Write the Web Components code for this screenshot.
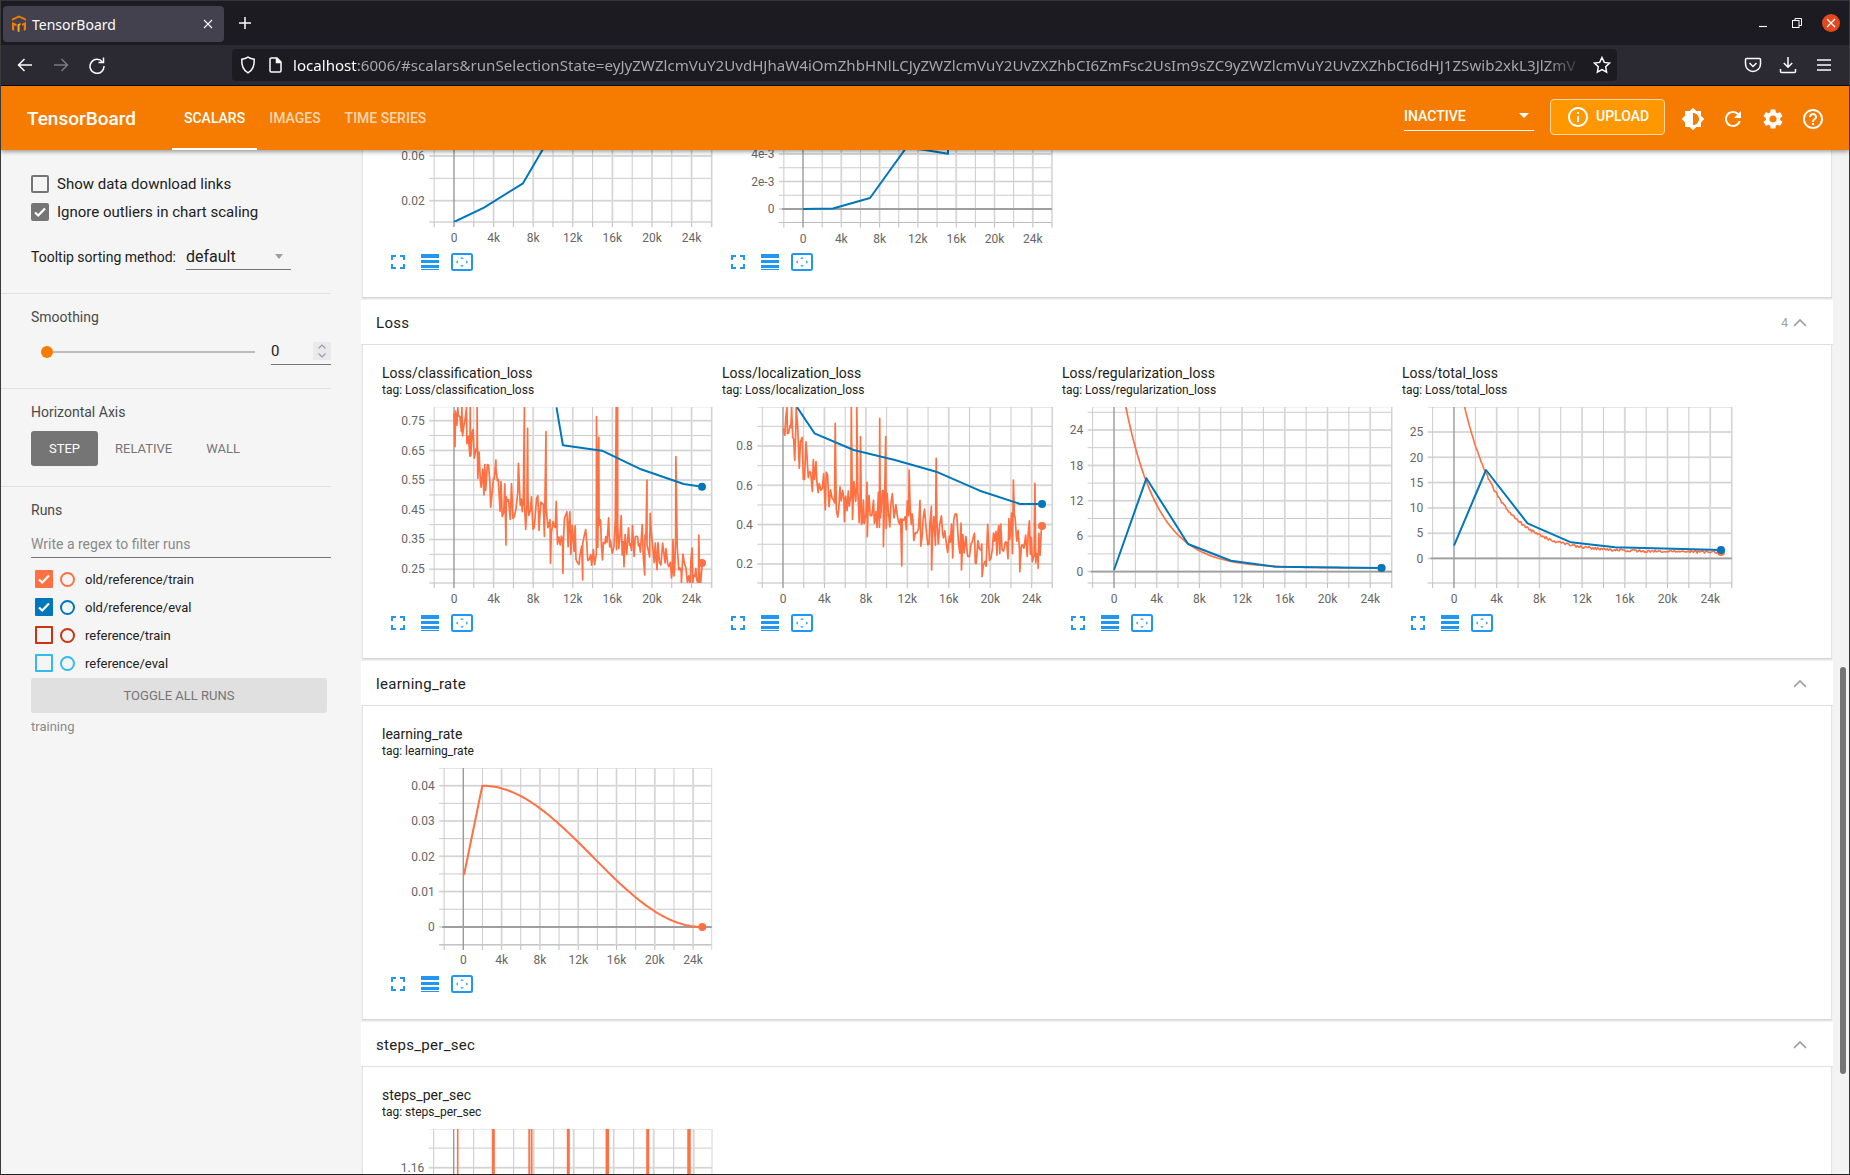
<!DOCTYPE html>
<html lang="en"><head><meta charset="utf-8"><title>TensorBoard</title>
<style>
html,body{margin:0;padding:0;height:100%;overflow:hidden;background:#f5f5f5;font-family:Roboto,"Liberation Sans",sans-serif}
</style></head>
<body>
<tb-app>
  <browser-chrome slot="chrome"></browser-chrome>
  <tb-header slot="header"></tb-header>
  <tb-sidebar slot="side"></tb-sidebar>
  <tb-main slot="main">
    <tb-section flush>
      <tb-chart name="a1"></tb-chart>
      <tb-chart name="a2"></tb-chart>
    </tb-section>
    <tb-section label="Loss" count="4">
      <tb-chart name="cls" heading="Loss/classification_loss"></tb-chart>
      <tb-chart name="loc" heading="Loss/localization_loss"></tb-chart>
      <tb-chart name="reg" heading="Loss/regularization_loss"></tb-chart>
      <tb-chart name="tot" heading="Loss/total_loss"></tb-chart>
    </tb-section>
    <tb-section label="learning_rate">
      <tb-chart name="lr" heading="learning_rate"></tb-chart>
    </tb-section>
    <tb-section label="steps_per_sec">
      <tb-chart name="sps" heading="steps_per_sec" notools></tb-chart>
    </tb-section>
  </tb-main>
</tb-app>
<script>
function def(name, css, html, init){
  customElements.define(name, class extends HTMLElement{
    connectedCallback(){
      if(this.shadowRoot) return;
      const r=this.attachShadow({mode:'open'});
      r.innerHTML='<style>'+css+'</style>'+(typeof html==='function'?html(this):html);
      if(init) init(this,r);
    }
  });
}
const mi=(d,s,rule)=>`<svg width="${s}" height="${s}" viewBox="0 0 24 24" fill="currentColor"><path fill-rule="${rule||'nonzero'}" d="${d}"/></svg>`;

def('tb-app',`
:host{display:flex;flex-direction:column;height:1175px;width:1850px;box-sizing:border-box;border-left:1px solid #3a3a3a;border-right:1px solid #3a3a3a;border-bottom:1px solid #222;overflow:hidden}
.row{display:flex;flex:1;min-height:0}
::slotted([slot=side]){flex:none}
::slotted([slot=main]){flex:1;min-width:0}
::slotted([slot=header]){position:relative;z-index:2}
`,`<slot name="chrome"></slot><slot name="header"></slot><div class="row"><slot name="side"></slot><slot name="main"></slot></div>`);

def('browser-chrome',`
:host{display:block;background:#1c1b22;color:#fbfbfe;font-family:"Noto Sans",sans-serif}
.tabs{height:44px;border-top:1px solid #34333b;display:flex;align-items:center;padding-left:2px}
.tab{width:221px;height:36px;background:#42414d;border-radius:4px;display:flex;align-items:center;padding:0 10px 0 8px;box-sizing:border-box;font-size:14px;gap:5px;margin-top:2px}
.tab span{flex:1;white-space:nowrap}
.plus{margin-left:14px;display:flex}
.win{margin-left:auto;display:flex;align-items:center;gap:23px;padding-right:9px;margin-top:-1px}
.close{width:18px;height:18px;border-radius:50%;background:#e2491e;display:flex;align-items:center;justify-content:center;margin-left:-4px}
.tool{height:40px;background:#2b2a33;display:flex;align-items:center;padding-left:15px;border-bottom:1px solid #0c0c0e}
.nav{display:flex;gap:18px;align-items:center;width:216px;flex:none}
.url{width:1385px;height:32px;flex:none;background:#1c1b22;border-radius:4px;display:flex;align-items:center;padding-left:61px;box-sizing:border-box;position:relative}
.sh{position:absolute;left:8px;top:7px}.pg{position:absolute;left:37px;top:8px}
.u{white-space:nowrap;font-size:15.1px;color:#a6a6ab;width:1292px;-webkit-mask-image:linear-gradient(90deg,#000 97%,transparent);mask-image:linear-gradient(90deg,#000 97%,transparent)}
.u b{font-weight:400;color:#fbfbfe}
.star{position:absolute;right:6px;top:7px}
.r{display:flex;align-items:center;gap:17px;margin-left:127px}
.r svg:last-child{margin-left:2px}
`,`
<div class="tabs">
 <div class="tab">
  <svg width="16" height="18" viewBox="0 0 16 18"><path fill="#f57c00" d="M8 .5l7 3.300v2L8 2.600 1 5.800v-2z"/><path fill="#f57c00" d="M1 7l4.500 2v2.200L3.200 10.200V16L1 14.800z"/><path fill="#ffa726" d="M6.500 9.500l3-1.500v2l-1 .5v6.800l-2-1z"/><path fill="#f57c00" d="M15 7l-4 1.800v2l1.800-.8v6l2.200-1.200z"/></svg>
  <span>TensorBoard</span>
  <svg width="12" height="12" viewBox="0 0 12 12" stroke="#fbfbfe" stroke-width="1.100"><path d="M2 2l8 8M10 2l-8 8"/></svg>
 </div>
 <div class="plus"><svg width="14" height="14" viewBox="0 0 14 14" stroke="#fbfbfe" stroke-width="1.500"><path d="M7 1v12M1 7h12"/></svg></div>
 <div class="win">
  <svg width="10" height="10" viewBox="0 0 10 10" stroke="#fbfbfe" stroke-width="1.200"><path d="M1 8.500h8"/></svg>
  <svg width="12" height="12" viewBox="0 0 12 12" fill="none" stroke="#fbfbfe" stroke-width="1"><rect x="1.500" y="3.500" width="6.500" height="7"/><path d="M4 3.500V1.500h6.500v7H8"/></svg>
  <div class="close"><svg width="10" height="10" viewBox="0 0 10 10" stroke="#fff" stroke-width="1.300"><path d="M1 1l8 8M9 1l-8 8"/></svg></div>
 </div>
</div>
<div class="tool">
 <div class="nav">
  <svg width="18" height="18" viewBox="0 0 18 18" fill="none" stroke="#fbfbfe" stroke-width="1.500"><path d="M16 9H3M8.500 3L2.500 9l6 6"/></svg>
  <svg width="18" height="18" viewBox="0 0 18 18" fill="none" stroke="#7a797f" stroke-width="1.500"><path d="M2 9h13M9.500 3l6 6-6 6"/></svg>
  <svg width="18" height="18" viewBox="0 0 18 18" fill="none" stroke="#fbfbfe" stroke-width="1.500"><path d="M14.500 6A7 7 0 1 0 16 10"/><path d="M15.500 1.500v5h-5" /></svg>
 </div>
 <div class="url">
  <svg class="sh" width="16" height="18" viewBox="0 0 16 18" fill="none" stroke="#fbfbfe" stroke-width="1.500"><path d="M8 1.200c2 1.300 4 1.800 6.200 2 .3 6-1.200 11-6.200 13.600C3 14.200 1.500 9.200 1.800 3.200 4 3 6 2.500 8 1.200z"/></svg>
  <svg class="pg" width="13" height="16" viewBox="0 0 13 16" fill="none" stroke="#fbfbfe" stroke-width="1.500"><path d="M1 2.200C1 1.500 1.500 1 2.200 1H8l4 4v8.800c0 .7-.5 1.200-1.200 1.200H2.200C1.500 15 1 14.500 1 13.800z" /><path d="M7.500 1v4.500H12" fill="#fbfbfe"/></svg>
  <div class="u"><b>localhost</b>:6006/#scalars&amp;runSelectionState=eyJyZWZlcmVuY2UvdHJhaW4iOmZhbHNlLCJyZWZlcmVuY2UvZXZhbCI6ZmFsc2UsIm9sZC9yZWZlcmVuY2UvZXZhbCI6dHJ1ZSwib2xkL3JlZmV</div>
  <svg class="star" width="18" height="18" viewBox="0 0 18 18" fill="none" stroke="#fbfbfe" stroke-width="1.500"><path d="M9 1.500l2.300 4.900 5.200.7-3.800 3.700.9 5.300L9 13.600l-4.600 2.500.9-5.300L1.500 7.100l5.200-.7z"/></svg>
 </div>
 <div class="r">
  <svg width="18" height="18" viewBox="0 0 18 18" fill="none" stroke="#fbfbfe" stroke-width="1.500"><path d="M2.500 2.500h13c.6 0 1 .4 1 1V8a7.500 7.500 0 0 1-15 0V3.500c0-.6.4-1 1-1z"/><path d="M5.500 7L9 10.500 12.500 7"/></svg>
  <svg width="18" height="18" viewBox="0 0 18 18" fill="none" stroke="#fbfbfe" stroke-width="1.500"><path d="M9 1v10M4.800 7L9 11.200 13.200 7M1.500 13v2.500c0 .6.400 1 1 1h13c.6 0 1-.4 1-1V13"/></svg>
  <svg width="16" height="14" viewBox="0 0 16 14" stroke="#fbfbfe" stroke-width="1.500"><path d="M1 2h14M1 7h14M1 12h14"/></svg>
 </div>
</div>`);

def('tb-header',`
:host{display:flex;align-items:center;height:64px;background:#f57c00;color:#fff;box-shadow:0 2px 4px rgba(0,0,0,.35);padding-left:26px;padding-right:16px;box-sizing:border-box;font-family:Roboto,sans-serif}
.title{font-size:19px;font-weight:500;width:110px;margin-right:35px;white-space:nowrap}
.tab{height:64px;box-sizing:border-box;padding:2px 12px 0;display:flex;align-items:center;font-size:14px;font-weight:500;color:rgba(255,255,255,.7);border-bottom:2px solid transparent;text-transform:uppercase;white-space:nowrap}
.tab.on{color:#fff;border-bottom-color:#fff}
.sp{flex:1}
.sel{width:130px;height:29px;box-sizing:border-box;border-bottom:1px solid #fff;display:flex;align-items:center;justify-content:space-between;font-size:14px;font-weight:500;padding-right:5px;margin-top:-4px;margin-right:16px}
.car{width:0;height:0;border-left:5px solid transparent;border-right:5px solid transparent;border-top:5px solid #fff}
.up{width:115px;height:36px;box-sizing:border-box;background:#ff9800;border:1px solid #ffd9a6;border-radius:4px;display:flex;align-items:center;justify-content:flex-start;padding-left:15px;gap:6px;font-size:14px;font-weight:500;margin-top:-2px;margin-right:8px}
.up span{padding-bottom:2px}
.ib{width:40px;height:40px;display:flex;align-items:center;justify-content:center;margin-top:2px}
`,`
<div class="title">TensorBoard</div>
<div class="tab on">Scalars</div><div class="tab">Images</div><div class="tab">Time Series</div>
<div class="sp"></div>
<div class="sel"><span>INACTIVE</span><i class="car"></i></div>
<div class="up">${mi('M11 7h2v2h-2zm0 4h2v6h-2zm1-9C6.480 2 2 6.480 2 12s4.480 10 10 10 10-4.480 10-10S17.520 2 12 2zm0 18c-4.410 0-8-3.590-8-8s3.590-8 8-8 8 3.590 8 8-3.590 8-8 8z',24)}<span>UPLOAD</span></div>
<div class="ib">${mi('M20 8.690V4h-4.690L12 .690 8.690 4H4v4.690L.690 12 4 15.310V20h4.690L12 23.310 15.310 20H20v-4.690L23.310 12 20 8.690zM12 18V6c3.310 0 6 2.690 6 6s-2.690 6-6 6z',24,'evenodd')}</div>
<div class="ib">${mi('M17.650 6.350C16.200 4.900 14.210 4 12 4c-4.420 0-7.990 3.580-7.990 8s3.570 8 7.990 8c3.730 0 6.840-2.550 7.730-6h-2.080c-.82 2.330-3.040 4-5.650 4-3.310 0-6-2.690-6-6s2.690-6 6-6c1.660 0 3.140.69 4.220 1.780L13 11h7V4l-2.350 2.350z',24)}</div>
<div class="ib">${mi('M19.140 12.940c.04-.3.06-.61.06-.94 0-.32-.02-.64-.07-.94l2.030-1.580c.18-.14.23-.41.12-.61l-1.920-3.320c-.12-.22-.37-.29-.59-.22l-2.390.96c-.5-.38-1.030-.7-1.620-.94l-.36-2.540c-.04-.24-.24-.41-.48-.41h-3.840c-.24 0-.43.17-.47.41l-.36 2.540c-.59.24-1.130.57-1.620.94l-2.390-.96c-.22-.08-.47 0-.59.22L2.740 8.870c-.12.21-.08.47.12.61l2.030 1.580c-.05.3-.09.63-.09.94s.02.64.07.94l-2.030 1.580c-.18.14-.23.41-.12.61l1.920 3.320c.12.22.37.29.59.22l2.390-.96c.5.38 1.030.7 1.620.94l.36 2.540c.05.24.24.41.48.41h3.840c.24 0 .44-.17.47-.41l.36-2.540c.59-.24 1.130-.56 1.620-.94l2.390.96c.22.08.47 0 .59-.22l1.920-3.320c.12-.22.07-.47-.12-.61l-2.010-1.580zM12 15.600c-1.980 0-3.600-1.620-3.600-3.600s1.620-3.600 3.600-3.600 3.600 1.620 3.600 3.600-1.620 3.600-3.600 3.600z',24)}</div>
<div class="ib">${mi('M11 18h2v-2h-2v2zm1-16C6.480 2 2 6.480 2 12s4.480 10 10 10 10-4.480 10-10S17.520 2 12 2zm0 18c-4.410 0-8-3.590-8-8s3.590-8 8-8 8 3.590 8 8-3.590 8-8 8zm0-14c-2.210 0-4 1.790-4 4h2c0-1.100.9-2 2-2s2 .9 2 2c0 2-3 1.750-3 5h2c0-2.250 3-2.500 3-5 0-2.210-1.790-4-4-4z',24)}</div>
`);

const tick=`<svg width="14" height="14" viewBox="0 0 14 14" fill="none" stroke="#fff" stroke-width="2.200"><path d="M2 7.500l3.200 3L12 3.500"/></svg>`;
def('tb-sidebar',`
:host{display:block;width:330px;margin-right:30px;color:#333;font-size:14px;font-family:Roboto,sans-serif;background:#f5f5f5}
.s{border-bottom:1px solid #e0e0e0;padding-left:30px}
.s.last{border:0}
.cb{height:28px;display:flex;align-items:center;gap:8px;color:#212121;font-size:15px}
.box{width:18px;height:18px;box-sizing:border-box;border:2px solid #757575;border-radius:2px;display:flex;align-items:center;justify-content:center;flex:none}
.box.fill{background:#757575}
.tt{display:flex;height:25px;align-items:center;margin-top:19px;gap:10px;color:#212121}
.tt>span{white-space:nowrap;width:145px;padding-bottom:2px}
.dd{width:105px;height:25px;box-sizing:border-box;border-bottom:1px solid #757575;display:flex;align-items:center;justify-content:space-between;font-size:16px;padding:0 8px 2px 0;color:#212121}
.car{width:0;height:0;border-left:4px solid transparent;border-right:4px solid transparent;border-top:5px solid #9e9e9e}
.lab{line-height:18px;color:#4a4a4a;padding-top:14px}
.sl{display:flex;align-items:center;height:25px;margin-top:14px;padding-left:10px}
.th{width:12px;height:12px;border-radius:50%;background:#f57c00;flex:none;margin-bottom:2px}
.tr{width:202px;height:2px;background:#bdbdbd;margin:0 16px 2px 0;flex:none}
.num{width:60px;height:25px;box-sizing:border-box;border-bottom:1px solid #757575;display:flex;justify-content:space-between;align-items:flex-start;font-size:15px;color:#212121;line-height:22px}
.spin{width:18px;height:18px;background:#e9e9ed;margin-top:2px;display:flex;align-items:center;justify-content:center}
.bts{display:flex;margin-top:10px;height:35px;font-size:13px;color:#757575;align-items:center;padding-bottom:20px}
.bts span{padding:0 17px;height:35px;line-height:35px;border-radius:3px;font-weight:400}
.bts .on{background:#757575;color:#fff;width:67px;padding:0;box-sizing:border-box;text-align:center}
.inp{margin-top:15px;line-height:20px;padding-bottom:3px;border-bottom:1px solid #757575;color:#8a8a8a;margin-bottom:7px}
.run{height:28px;display:flex;align-items:center;padding-left:4px;font-size:13px;color:#212121}
.run .box{border-radius:1px;margin-right:7px}
.dot{width:15px;height:15px;box-sizing:border-box;border-radius:50%;border:2px solid;margin-right:10px}
.tog{width:296px;height:35px;margin-top:1px;background:#e0e0e0;border-radius:3px;color:#757575;font-size:13px;display:flex;align-items:center;justify-content:center}
.tr2{margin-top:5px;line-height:18px;font-size:13px;color:#8a8a8a}
`,`
<div class="s" style="padding-top:20px;padding-bottom:23px">
 <div class="cb"><div class="box"></div><span>Show data download links</span></div>
 <div class="cb"><div class="box fill">${tick}</div><span>Ignore outliers in chart scaling</span></div>
 <div class="tt"><span>Tooltip sorting method:</span><div class="dd"><span>default</span><i class="car"></i></div></div>
</div>
<div class="s" style="padding-bottom:23px">
 <div class="lab">Smoothing</div>
 <div class="sl"><div class="th"></div><div class="tr"></div>
  <div class="num"><span>0</span><div class="spin"><svg width="10" height="16" viewBox="0 0 10 16" fill="none" stroke="#9a9a9f" stroke-width="1.200"><path d="M1.500 5.500L5 2l3.500 3.500M1.500 10.500L5 14l3.500-3.500"/></svg></div></div></div>
</div>
<div class="s">
 <div class="lab">Horizontal Axis</div>
 <div class="bts"><span class="on">STEP</span><span>RELATIVE</span><span>WALL</span></div>
</div>
<div class="s last">
 <div class="lab">Runs</div>
 <div class="inp">Write a regex to filter runs</div>
 <div class="run"><div class="box" style="background:#ff7043;border-color:#ff7043">${tick}</div><i class="dot" style="color:#ff7043"></i>old/reference/train</div>
 <div class="run"><div class="box" style="background:#0077bb;border-color:#0077bb">${tick}</div><i class="dot" style="color:#0077bb"></i>old/reference/eval</div>
 <div class="run"><div class="box" style="border-color:#cc3311"></div><i class="dot" style="color:#cc3311"></i>reference/train</div>
 <div class="run"><div class="box" style="border-color:#33bbee"></div><i class="dot" style="color:#33bbee"></i>reference/eval</div>
 <div class="tog">TOGGLE ALL RUNS</div>
 <div class="tr2">training</div>
</div>
`);

def('tb-main',`
:host{display:block;position:relative;overflow:hidden;background:#f3f3f3}
.wrap{width:1472px}
.bar{position:absolute;right:3px;top:517px;width:6px;height:407px;border-radius:3px;background:#757575}
`,`<div class="wrap"><slot></slot></div><div class="bar"></div>`);

def('tb-section',`
:host{display:block;margin-bottom:2px}
.h{background:#fff;border-bottom:1px solid #e0e0e0;display:flex;align-items:center;padding:1px 26px 0 15px;box-sizing:content-box;height:43px;font-size:15px;letter-spacing:.3px;color:#212121}
.h span{flex:1}
.h small{font-size:12px;letter-spacing:0;color:#9e9e9e;margin-right:5px}
.c{display:flex;background:#fff;margin-left:1px;margin-right:1px;border-left:1px solid #e4e4e4;border-right:1px solid #e4e4e4;border-bottom:1px solid #d6d6d6;padding:0 0 0 19px;box-shadow:0 1px 1px rgba(0,0,0,.05)}
`,(el)=>`${el.hasAttribute('flush')?'':`<div class="h"><span>${el.getAttribute('label')}</span>${el.getAttribute('count')?`<small>${el.getAttribute('count')}</small>`:''}<svg width="14" height="9" viewBox="0 0 14 9" fill="none" stroke="#9e9e9e" stroke-width="1.700"><path d="M1 8l6-6 6 6"/></svg></div>`}<div class="c"><slot></slot></div>`);

/* ---------- chart data, in page coordinates ---------- */
function rng(s){return ()=>{s|=0;s=s+0x6D2B79F5|0;let t=Math.imul(s^s>>>15,1|s);t=t+Math.imul(t^t>>>7,61|t)^t;return((t^t>>>14)>>>0)/4294967296}}
function lerp(b,x){for(let i=1;i<b.length;i++){if(x<=b[i][0]){const a=b[i-1],c=b[i];return a[1]+(c[1]-a[1])*(x-a[0])/(c[0]-a[0])}}return b[b.length-1][1]}
function noisy(seed,base,up,down,spikes,step,end,last){
  const r=rng(seed),pts=[];const sp=spikes.slice().sort((a,b)=>a[0]-b[0]);let k=0;
  for(let x=base[0][0];x<=end;x+=step*(.6+.8*r())){
    while(k<sp.length&&sp[k][0]<=x){pts.push(sp[k]);k++}
    const b=lerp(base,x),m=r();
    const y=r()>.48?b-up*m:b+down*m;
    pts.push([x,y]);
  }
  pts.push([end,last]);
  return pts;
}
const Z1=a=>a.map(p=>[360+p[0]/2.178,350+p[1]/3]);
const O='#ff7043',B='#0077bb';
const exp=(x0,x1,y0,A,xs,tau,nz,seed)=>{const r=rng(seed||1),o=[];for(let x=x0;x<=x1;x+=nz?1.2:2){o.push([x,y0-A*Math.exp(-(x-xs)/tau)+(nz?(r()-.5)*nz*Math.min(1,(x-x0)/30):0)])}return o};

const CFG={
 a1:{left:382,top:150,h:97,x0:454,step:39.6,pT:46,pB:222,pR:712,y0:156,dy:44.7,minor:1,ticks:[['0.06',156],['0.02',200.7]],
   s:[[B,[[454,222],[484,207.7],[523,183.3],[543.600,148]]]]},
 a2:{left:722,top:150,h:97,x0:803,step:38.3,pT:46,pB:222.500,pR:1052,y0:154,dy:27.5,minor:1,ticks:[['4e-3',154],['2e-3',181.700],['0',209]],zero:209,
   s:[[B,[[803,209],[833,208.500],[870,198],[906,148],[922,149.500],[948,153.700],[948,148]]]]},
 cls:{left:382,top:407,h:201,x0:454,step:39.6,pT:407,pB:583,pR:712,y0:420.700,dy:29.7,minor:1,ticks:[['0.75',420.7],['0.65',450.7],['0.55',480],['0.45',510],['0.35',539],['0.25',569]],
   s:[[O,noisy(11,Z1([[205,230],[235,240],[250,330],[280,420],[330,470],[400,505],[450,545],[480,610],[520,590],[560,560],[600,570],[650,610],[700,650],[745,660]]),27,18,
      Z1([[207,290],[213,172],[222,172],[232,172],[240,172],[255,172],[358,172],[365,235],[405,245],[515,200],[520,262],[558,172],[561,172],[688,320],[625,390],[632,490],[738,555],[296,330],[345,340],[415,640],[442,670],[485,690],[575,650],[620,675],[700,700],[725,700],[318,585]]),1.3,702,563),1.7],
      [B,Z1([[428,172],[442,286],[527,302],[612,358],[705,402],[745,410]]),2]],
   dots:[[702,563,O],[702,486.700,B]]},
 loc:{left:722,top:407,h:201,x0:783,step:41.45,pT:407,pB:583,pR:1052,y0:446,dy:39.3,minor:1,ticks:[['0.8',446],['0.6',485.3],['0.4',524.7],['0.2',564]],
   s:[[O,noisy(23,Z1([[922,230],[960,320],[1000,420],[1060,460],[1120,470],[1180,520],[1250,540],[1300,570],[1360,590],[1420,570],[1485,590]]),27,20,
      Z1([[930,172],[940,172],[950,172],[1035,220],[1070,172],[1082,172],[1090,260],[1132,205],[1145,260],[1196,360],[1255,325],[1423,390],[1470,400],[1140,590],[1180,648],[1245,660],[1310,660],[1355,680],[1437,665],[1477,655],[1055,515],[1105,560]]),1.3,1042,526),1.7],
      [B,Z1([[952,172],[990,250],[1075,300],[1165,330],[1255,365],[1350,422],[1438,462],[1485,462]]),2]],
   dots:[[1042,526,O],[1042,504,B]]},
 reg:{left:1062,top:407,h:201,x0:1114,step:42.7,pT:407,pB:583,pR:1392,y0:430,dy:35.4,minor:1,ticks:[['24',430],['18',465.7],['12',501],['6',536],['0',571.7]],zero:571.700,
   s:[[O,exp(1122,1381,568,161,1125.800,33),1.7],
      [B,[[1114,570],[1146.400,478.300],[1188,544],[1231,560.700],[1275,566.700],[1381.500,568]],2]],
   dots:[[1381.500,568,O],[1381.500,568,B]]},
 tot:{left:1402,top:407,h:201,x0:1454,step:42.7,pT:407,pB:583,pR:1732,y0:432,dy:25.3,minor:0,ticks:[['25',432],['20',457.3],['15',482.3],['10',507.7],['5',533],['0',558.3]],zero:558.300,
   s:[[O,exp(1462,1721,552,145,1464.600,35,2.600,5),1.6],
      [B,[[1454,545.700],[1486,470],[1527.500,523.300],[1571,542.300],[1615,547.300],[1721,550]],2]],
   dots:[[1721,552,O],[1721,550,B]]},
 lr:{left:382,top:768,h:201,lab:18.500,x0:463.300,step:38.3,pT:768,pB:945,pR:711.700,y0:785.700,dy:35.3,minor:1,ticks:[['0.04',785.7],['0.03',821],['0.02',856.3],['0.01',891.7],['0',927]],zero:927,
   s:[[O,(()=>{const o=[[464,875]];for(let x=482.300;x<=702.400;x+=2){const t=(x-482.300)/(702.300-482.300);o.push([x,927-141.300*.5*(1+Math.cos(Math.PI*t))])}return o})(),2]],
   dots:[[702.300,927,O]]},
 sps:{left:382,top:1129,h:45,x0:453.700,step:40,pT:1129,pB:1305,pR:712,y0:1167.700,dy:39.2,minor:1,ticks:[['1.16',1167.7]],
   s:[[O,[[457.700,1129],[457.700,1180]],1.6],[O,[[493.300,1129],[493.300,1180]],3],[O,[[529.300,1129],[529.300,1180]],2],[O,[[531.700,1129],[531.700,1180]],1.6],[O,[[568.300,1129],[568.300,1180]],3],[O,[[607.300,1129],[607.300,1180]],3.500],[O,[[647.700,1129],[647.700,1180]],3],[O,[[689,1129],[689,1180]],3.500]]},
};
function plot(c){
  const L=c.x0-c.step/2,o=[];
  const n=(x1,y1,x2,y2,col,w)=>o.push(`<line x1="${x1}" y1="${y1}" x2="${x2}" y2="${y2}" stroke="${col}" stroke-width="${w}"/>`);
  const MAJ='#e4e4e4',MIN='#cbcbcb';
  const hs=[];
  for(let k=-20;k<=20;k++){const y=c.y0+k*c.dy;if(y>=c.pT-.5&&y<=c.pB+.5)hs.push([y,1]);const m=y+c.dy/2;if(c.minor&&m>=c.pT&&m<=c.pB)hs.push([m,0])}
  hs.forEach(h=>n(L-5,h[0],c.pR,h[0],h[1]?MAJ:MIN,h[1]?2:1));
  hs.filter(h=>h[1]).forEach(h=>n(L-5,h[0],c.pR,h[0],'#c9c9c9',.7));
  n(L,c.pT,c.pR,c.pT,'#e6e6e6',1);
  n(L-5,c.pB,c.pR,c.pB,'#bdbdbd',1.2);
  for(let i=-1;;i++){const x=c.x0+i*c.step/2;if(x>c.pR+.5)break;if(i===0)continue;
    const maj=i%2===0;
    n(x,c.pT,x,c.pB,maj?MAJ:MIN,maj?2:1);
    if(maj)n(x,c.pT,x,c.pB,'#cbcbcb',.7);
    n(x,c.pB,x,c.pB+5,'#bdbdbd',1);
  }
  n(c.pR,c.pT,c.pR,c.pB+5,'#d6d6d6',1);
  n(c.x0,c.pT,c.x0,c.pB+5,'#9a9a9a',1.4);
  if(c.zero)n(L-2,c.zero,c.pR,c.zero,'#9e9e9e',1.8);
  const lab=c.ticks.map(t=>`<text x="${(L-9.5-c.left).toFixed(1)}" y="${(t[1]+4.2-c.top).toFixed(1)}" text-anchor="end">${t[0]}</text>`);
  const ly=c.pB+(c.lab||20)-c.top;
  if(ly<c.h) for(let i=0;i<=12;i+=2){const x=c.x0+i*c.step/2-c.left;lab.push(`<text x="${x.toFixed(1)}" y="${ly}" text-anchor="middle">${i?i*2+'k':0}</text>`)}
  const lines=c.s.map(s=>`<path d="M${s[1].map(p=>p[0].toFixed(1)+' '+p[1].toFixed(1)).join('L')}" fill="none" stroke="${s[0]}" stroke-width="${s[2]||2}" stroke-linejoin="round"/>`);
  const dots=(c.dots||[]).map(d=>`<circle cx="${d[0]}" cy="${d[1]}" r="4" fill="${d[2]}"/>`);
  return `<svg width="340" height="${c.h}" font-family="Roboto,sans-serif" font-size="12" fill="#666">
   <defs><clipPath id="cp"><rect x="${L}" y="${c.pT}" width="${c.pR-L}" height="${c.pB-c.pT}"/></clipPath></defs>
   <g transform="translate(${-c.left} ${-c.top})">${o.join('')}<g clip-path="url(#cp)">${lines.join('')}</g>${dots.join('')}</g>${lab.join('')}</svg>`;
}
const B2='#2196f3';
const tools=`<div class="tl">
 <svg width="14" height="14" viewBox="0 0 14 14" fill="none" stroke="${B2}" stroke-width="2"><path d="M5 1H1v4M9 1h4v4M1 9v4h4M13 9v4H9"/></svg>
 <svg width="18" height="16" viewBox="0 0 18 16" fill="${B2}"><rect width="18" height="4"/><rect y="6" width="18" height="3"/><rect y="11" width="18" height="3"/><rect y="15" width="18" height="1"/></svg>
 <svg width="22" height="18" viewBox="0 0 22 18" fill="${B2}"><rect x="1" y="1" width="20" height="16" rx="1.500" fill="none" stroke="${B2}" stroke-width="2"/><path d="M11 4l1.800 1.800H9.200zM11 14l1.800-1.800H9.200zM5 9l1.800-1.800v3.600zM17 9l-1.800-1.800v3.600z"/></svg>
</div>`;
def('tb-chart',`
:host{display:block;width:340px;flex:none;color:#212121;font-family:Roboto,sans-serif;padding-bottom:26px}
.t{padding-top:19px;font-size:14px;line-height:18px;white-space:nowrap}
.g{font-size:12px;line-height:16px;white-space:nowrap;margin-bottom:9px}
svg{display:block}
.tl{display:flex;align-items:center;height:18px;margin-top:6px;padding-left:9px}
.tl svg:nth-child(1){margin-right:16px}.tl svg:nth-child(2){margin-right:12px}
`,(el)=>{const c=CFG[el.getAttribute('name')],h=el.getAttribute('heading');
  return (h?`<div class="t">${h}</div><div class="g">tag: ${h}</div>`:'')+plot(c)+(el.hasAttribute('notools')?'':tools)});
</script>
</body></html>
